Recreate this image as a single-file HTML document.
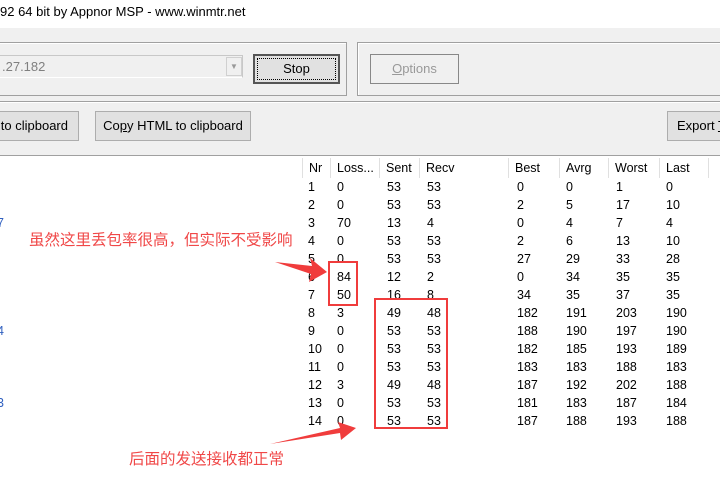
<!DOCTYPE html>
<html><head><meta charset="utf-8"><style>
body{margin:0;width:720px;height:480px;overflow:hidden;background:#f0f0f0;font-family:"Liberation Sans","Noto Sans CJK SC",sans-serif;font-size:13px;color:#000;position:relative}
.a{position:absolute}
.btn{position:absolute;border:1px solid #adadad;background:#e1e1e1;box-sizing:border-box;text-align:center;font-size:13px}
.grp{position:absolute;border:1px solid #a0a0a0;box-sizing:border-box;box-shadow:1px 1px 0 #fff inset}
.c{position:absolute;font-size:12.5px}
.h{position:absolute;top:158px;height:20px;border-right:1px solid #e0e0e0;line-height:21px;padding-left:6px;box-sizing:border-box;font-size:12.5px}
.red{position:absolute;border:2px solid #f03c3c;box-sizing:border-box}
.note{position:absolute;color:#f04848;font-size:15.5px;font-family:"Noto Sans CJK SC",sans-serif}
</style></head><body>
<div class="a" style="left:0;top:0;width:720px;height:28px;background:#fff"></div>
<div class="a" style="left:0;top:4px;font-size:13px">92 64 bit by Appnor MSP - www.winmtr.net</div>
<div class="grp" style="left:-2px;top:42px;width:349px;height:54px"></div>
<div class="a" style="left:0;top:55px;width:243px;height:23px;border:1px solid #c8c8c8;border-left:none;border-bottom-color:#fff;box-sizing:border-box;background:#f0f0f0"></div>
<div class="a" style="left:2px;top:59px;color:#808080">.27.182</div>
<div class="a" style="left:226px;top:57px;width:16px;height:19px;border:1px solid #d0d0d0;box-sizing:border-box;color:#999;font-size:8px;text-align:center;line-height:17px">▼</div>
<div class="btn" style="left:253px;top:54px;width:87px;height:30px;border:2px solid #555;line-height:26px"><div style="position:absolute;left:2px;top:2px;right:2px;bottom:2px;border:1px dotted #000"></div>Stop</div>
<div class="grp" style="left:357px;top:42px;width:370px;height:54px"></div>
<div class="btn" style="left:370px;top:54px;width:89px;height:30px;line-height:28px;color:#999;background:#f0f0f0;border-color:#888"><u>O</u>ptions</div>
<div class="a" style="left:0;top:101px;width:720px;height:1px;background:#a0a0a0"></div>
<div class="a" style="left:0;top:102px;width:720px;height:1px;background:#fff"></div>
<div class="btn" style="left:-10px;top:111px;width:89px;height:30px;line-height:28px;text-align:right;padding-right:10px">to clipboard</div>
<div class="btn" style="left:95px;top:111px;width:156px;height:30px;line-height:28px">Co<u>p</u>y HTML to clipboard</div>
<div class="btn" style="left:667px;top:111px;width:70px;height:30px;line-height:28px;text-align:left;padding-left:9px">Export <u>T</u></div>
<div class="a" style="left:0;top:155px;width:720px;height:325px;background:#fff;border-top:1px solid #a0a0a0"></div>
<div class="h" style="left:0;width:303px"></div>
<div class="h" style="left:303px;width:28px">Nr</div>
<div class="h" style="left:331px;width:49px">Loss...</div>
<div class="h" style="left:380px;width:40px">Sent</div>
<div class="h" style="left:420px;width:89px">Recv</div>
<div class="h" style="left:509px;width:51px">Best</div>
<div class="h" style="left:560px;width:49px">Avrg</div>
<div class="h" style="left:609px;width:51px">Worst</div>
<div class="h" style="left:660px;width:49px">Last</div>
<div id="rows"></div>
<script>
var d=[[1,0,53,53,0,0,1,0],[2,0,53,53,2,5,17,10],[3,70,13,4,0,4,7,4],[4,0,53,53,2,6,13,10],[5,0,53,53,27,29,33,28],[6,84,12,2,0,34,35,35],[7,50,16,8,34,35,37,35],[8,3,49,48,182,191,203,190],[9,0,53,53,188,190,197,190],[10,0,53,53,182,185,193,189],[11,0,53,53,183,183,188,183],[12,3,49,48,187,192,202,188],[13,0,53,53,181,183,187,184],[14,0,53,53,187,188,193,188]];
var x=[308,337,387,427,517,566,616,666],h="";
d.forEach(function(r,i){r.forEach(function(v,j){h+='<div class="c" style="left:'+x[j]+'px;top:'+(180+i*18)+'px">'+v+'</div>'})});
document.getElementById('rows').innerHTML=h;
</script>
<div class="c" style="left:-3px;top:216px;color:#3060c0">7</div>
<div class="c" style="left:-3px;top:324px;color:#3060c0">4</div>
<div class="c" style="left:-3px;top:396px;color:#3060c0">3</div>
<div class="red" style="left:328px;top:261px;width:30px;height:45px"></div>
<div class="red" style="left:374px;top:298px;width:74px;height:131px"></div>
<svg class="a" style="left:0;top:0" width="720" height="480">
<polygon points="275,262 312,266 310,258 327,272 309,282 311,274" fill="#f03c3c"/>
<polygon points="270,444 340,428 338,422 356,428 341,440 340,433" fill="#f03c3c"/>
</svg>
<div class="note" style="left:29px;top:228px">虽然这里丢包率很高，但实际不受影响</div>
<div class="note" style="left:129px;top:447px">后面的发送接收都正常</div>
</body></html>
